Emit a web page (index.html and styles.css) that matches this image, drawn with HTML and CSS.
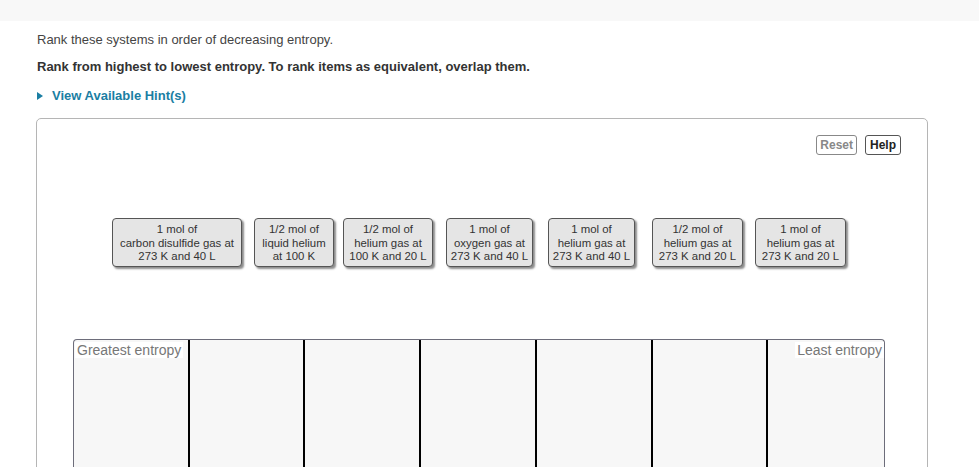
FILE: index.html
```html
<!DOCTYPE html>
<html>
<head>
<meta charset="utf-8">
<link rel="stylesheet" href="styles.css">
</head>
<body>
<div class="topband"></div>
<div class="content">
  <p class="question">Rank these systems in order of decreasing entropy.</p>
  <p class="instr">Rank from highest to lowest entropy. To rank items as equivalent, overlap them.</p>
  <div class="hint"><span class="tri"></span><span class="hint-text">View Available Hint(s)</span></div>
  <div class="panel">
    <div class="tools">
      <span class="btn btn-reset">Reset</span>
      <span class="btn btn-help">Help</span>
    </div>
    <div class="cards">
      <div class="card c1">1 mol of<br>carbon disulfide gas at<br>273 K and 40 L</div>
      <div class="card c2">1/2 mol of<br>liquid helium<br>at 100 K</div>
      <div class="card c3">1/2 mol of<br>helium gas at<br>100 K and 20 L</div>
      <div class="card c4">1 mol of<br>oxygen gas at<br>273 K and 40 L</div>
      <div class="card c5">1 mol of<br>helium gas at<br>273 K and 40 L</div>
      <div class="card c6">1/2 mol of<br>helium gas at<br>273 K and 20 L</div>
      <div class="card c7">1 mol of<br>helium gas at<br>273 K and 20 L</div>
    </div>
    <div class="ranking">
      <div class="col"><span class="label">Greatest entropy</span></div>
      <div class="col"></div>
      <div class="col"></div>
      <div class="col"></div>
      <div class="col"></div>
      <div class="col"></div>
      <div class="col last"><span class="label right">Least entropy</span></div>
    </div>
  </div>
</div>
</body>
</html>
```

FILE: styles.css
```css
html, body {
  margin: 0;
  padding: 0;
  background: #fff;
  font-family: "Liberation Sans", Arial, sans-serif;
  color: #333;
  overflow: hidden;
}
.topband {
  height: 21px;
  background: #f8f8f8;
}
.content {
  padding: 0 51px 0 36px;
}
.question {
  margin: 11px 0 0 1px;
  font-size: 13px;
  line-height: 15px;
  color: #444;
}
.instr {
  margin: 12px 0 0 1px;
  font-size: 13px;
  line-height: 15px;
  font-weight: bold;
  color: #333;
}
.hint {
  margin-top: 14px;
  display: flex;
  align-items: center;
  height: 15px;
  padding-left: 1px;
}
.tri {
  width: 0;
  height: 0;
  border-top: 4px solid transparent;
  border-bottom: 4px solid transparent;
  border-left: 6px solid #1a7ea3;
  margin-right: 9px;
}
.hint-text {
  font-size: 13px;
  font-weight: bold;
  color: #1a7ea3;
}
.panel {
  margin-top: 15px;
  border: 1px solid #b5b5b5;
  border-radius: 5px;
  height: 400px;
  box-sizing: border-box;
  padding-top: 16px;
}
.tools {
  display: flex;
  justify-content: flex-end;
  gap: 8px;
  padding-right: 26px;
}
.btn {
  display: inline-block;
  border: 1px solid #666;
  border-radius: 3px;
  font-size: 12px;
  font-weight: bold;
  line-height: 18px;
  padding: 0 3px;
}
.btn-reset {
  color: #888;
  border-color: #888;
}
.btn-help {
  color: #222;
  border-color: #555;
  padding: 0 4px;
}
.cards {
  display: flex;
  justify-content: center;
  margin-top: 63px;
  padding-right: 6px;
}
.card {
  box-sizing: border-box;
  height: 49px;
  border: 1px solid #555;
  border-radius: 4px;
  background: #e5e5e5;
  box-shadow: 2px 2px 2px rgba(0,0,0,0.45);
  font-size: 11.4px;
  line-height: 13.5px;
  color: #333;
  text-align: center;
  padding-top: 4px;
  white-space: nowrap;
}
.c1 { width: 130px; }
.c2 { width: 80px; margin-left: 12px; }
.c3 { width: 90px; margin-left: 9px; }
.c4 { width: 87px; margin-left: 13px; }
.c5 { width: 87px; margin-left: 15px; }
.c6 { width: 91px; margin-left: 17px; }
.c7 { width: 91px; margin-left: 12px; }
.ranking {
  display: grid;
  grid-template-columns: repeat(7, 1fr);
  margin: 72px 42px 0 36px;
  height: 160px;
  border: 1px solid #6d6d7a;
  border-bottom: none;
  border-radius: 4px 4px 0 0;
  background: #f7f7f7;
}
.col {
  border-right: 2px solid #000;
  position: relative;
}
.col.last {
  border-right: none;
}
.label {
  position: absolute;
  top: 2px;
  left: 1px;
  background: #fff;
  font-size: 14px;
  line-height: 16px;
  color: #777;
  padding: 0 2px;
}
.label.right {
  left: auto;
  right: 0;
}
```
